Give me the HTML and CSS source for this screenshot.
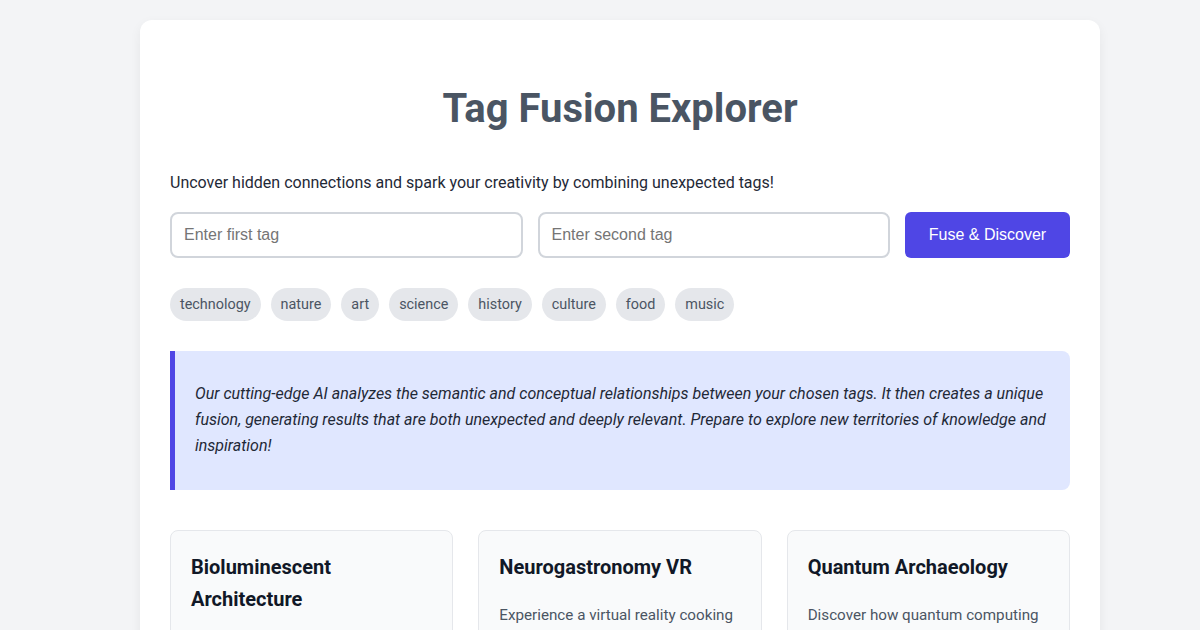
FILE: index.html
```html
<!DOCTYPE html>
<html lang="en">
<head>
<meta charset="utf-8">
<title>Tag Fusion Explorer</title>
<link rel="stylesheet" href="styles.css">
</head>
<body>
<main class="container">
  <h1 class="title">Tag Fusion Explorer</h1>
  <p class="intro">Uncover hidden connections and spark your creativity by combining unexpected tags!</p>
  <div class="fuse-row">
    <input class="tag-input" type="text" placeholder="Enter first tag">
    <input class="tag-input" type="text" placeholder="Enter second tag">
    <button class="fuse-btn" type="button">Fuse &amp; Discover</button>
  </div>
  <div class="tags">
    <span class="tag">technology</span>
    <span class="tag">nature</span>
    <span class="tag">art</span>
    <span class="tag">science</span>
    <span class="tag">history</span>
    <span class="tag">culture</span>
    <span class="tag">food</span>
    <span class="tag">music</span>
  </div>
  <div class="info">
    <p>Our cutting-edge AI analyzes the semantic and conceptual relationships between your chosen tags. It then creates a unique fusion, generating results that are both unexpected and deeply relevant. Prepare to explore new territories of knowledge and inspiration!</p>
  </div>
  <div class="results">
    <article class="card">
      <h3 class="card-title">Bioluminescent Architecture</h3>
      <p class="card-text">Explore how living light from glowing organisms could illuminate the buildings and cities of tomorrow.</p>
    </article>
    <article class="card">
      <h3 class="card-title">Neurogastronomy VR</h3>
      <p class="card-text">Experience a virtual reality cooking journey that maps flavors to the brain's response.</p>
    </article>
    <article class="card">
      <h3 class="card-title">Quantum Archaeology</h3>
      <p class="card-text">Discover how quantum computing could reconstruct lost artifacts and ancient histories.</p>
    </article>
  </div>
</main>
</body>
</html>
```

FILE: styles.css
```css
* { box-sizing: border-box; }
html, body { margin: 0; padding: 0; }
body {
  background: #f3f4f6;
  font-family: Roboto, "Liberation Sans", Arial, sans-serif;
  color: #1f2937;
  padding: 20px 0 20px 40px;
}
.container {
  width: 960px;
  margin: 0 auto;
  background: #ffffff;
  border-radius: 12px;
  box-shadow: 0 4px 12px rgba(0, 0, 0, 0.06);
  padding: 40px 30px 40px;
}
.title {
  margin: 25px 0 38px;
  font-size: 40px;
  line-height: 48px;
  font-weight: 700;
  text-align: center;
  color: #4a5563;
}
.intro {
  margin: 0 0 17px;
  font-size: 16px;
  line-height: 24px;
  color: #1f2937;
}
.fuse-row {
  display: flex;
  gap: 15px;
  align-items: stretch;
}
.tag-input {
  flex: 1;
  height: 46px;
  border: 2px solid #d1d5db;
  border-radius: 8px;
  padding: 0 12px;
  font-family: "Liberation Sans", Arial, sans-serif;
  font-size: 16px;
  color: #1f2937;
  background: #fff;
}
.tag-input::placeholder { color: #757575; }
.fuse-btn {
  width: 165px;
  height: 46px;
  border: none;
  border-radius: 6px;
  background: #4f46e5;
  color: #ffffff;
  font-family: "Liberation Sans", Arial, sans-serif;
  font-size: 16px;
  cursor: pointer;
}
.tags {
  display: flex;
  flex-wrap: wrap;
  gap: 10px;
  margin-top: 30px;
}
.tag {
  background: #e5e7eb;
  color: #4b5563;
  font-size: 14.4px;
  line-height: 33px;
  height: 33px;
  padding: 0 10px;
  border-radius: 17px;
}
.info {
  margin-top: 30px;
  background: #e0e7ff;
  border-left: 5px solid #4f46e5;
  border-radius: 0 8px 8px 0;
  padding: 30px 20px 31px;
}
.info p {
  margin: 0;
  font-style: italic;
  font-size: 16px;
  line-height: 26px;
  color: #1f2937;
}
.results {
  display: grid;
  grid-template-columns: repeat(3, 1fr);
  gap: 25px;
  margin-top: 40px;
}
.card {
  background: #f9fafb;
  border: 1px solid #e5e7eb;
  border-radius: 8px;
  padding: 20px;
}
.card-title {
  margin: 0 0 20px;
  font-size: 20px;
  line-height: 32px;
  font-weight: 700;
  color: #111827;
}
.card-text {
  margin: 0;
  font-size: 15.2px;
  line-height: 24px;
  color: #4b5563;
}
```
